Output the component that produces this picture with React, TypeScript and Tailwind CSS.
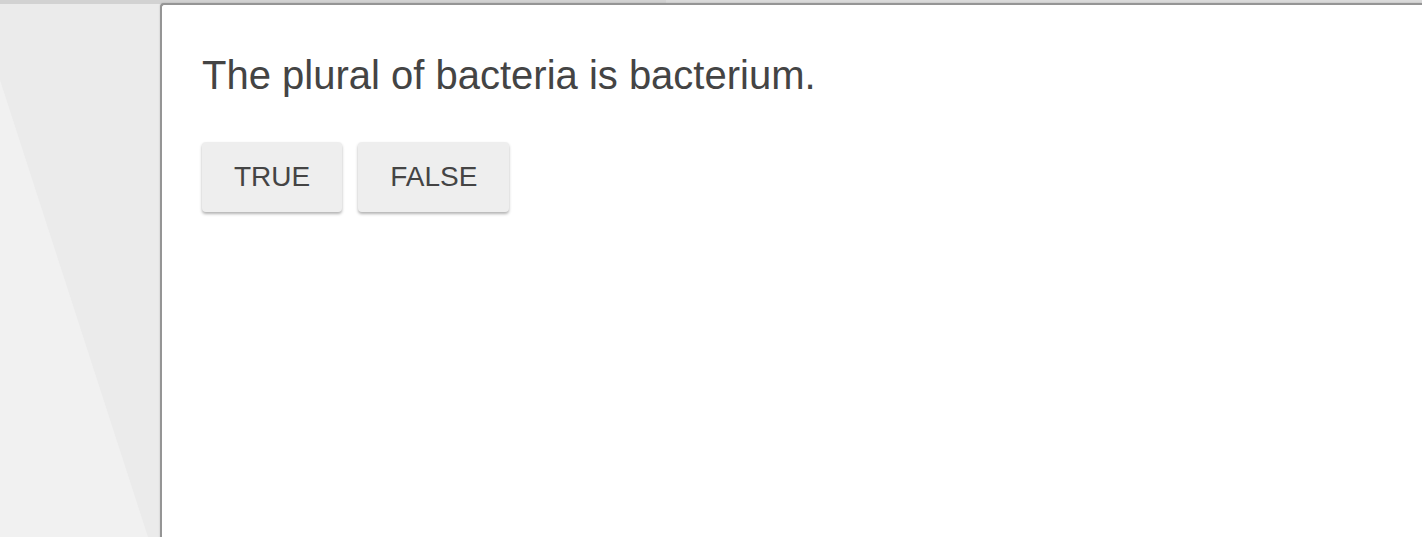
import React from "react";

export default function App() {
  return (
    <div
      className="relative w-[1422px] h-[537px] overflow-hidden bg-[#ebebeb]"
      style={{ fontFamily: '"Liberation Sans", Arial, sans-serif' }}
    >
      <svg className="absolute inset-0" width="1422" height="537" viewBox="0 0 1422 537">
        <polygon points="0,80 148,537 0,537" fill="#f1f1f1" />
        <rect x="0" y="0" width="666" height="4" fill="#d2d2d2" />
        <rect x="666" y="0" width="756" height="4" fill="#dadada" />
      </svg>
      <div className="relative ml-[160px] mt-[3px] h-[560px] bg-white border-2 border-[#959595] border-r-0 rounded-tl-[4px] shadow-[0_0_2px_rgba(0,0,0,0.2)] pl-[40px] pt-[46px]">
        <p className="text-[40px] leading-[48px] text-[#444444]">
          The plural of bacteria is bacterium.
        </p>
        <div className="flex gap-[16px] mt-[43px]">
          <button className="h-[70px] px-[32px] bg-[#eeeeee] rounded-[4px] text-[28px] text-[#444444] shadow-[0_2px_3px_rgba(0,0,0,0.3)]">
            TRUE
          </button>
          <button className="h-[70px] px-[32px] bg-[#eeeeee] rounded-[4px] text-[28px] text-[#444444] shadow-[0_2px_3px_rgba(0,0,0,0.3)]">
            FALSE
          </button>
        </div>
      </div>
    </div>
  );
}
